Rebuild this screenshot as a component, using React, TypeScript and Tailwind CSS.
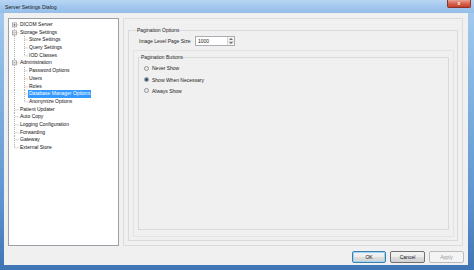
import React from 'react'

type Row = {
  label: string
  level: 0 | 1
  expander?: '+' | '-'
  first?: boolean
  last?: boolean
  selected?: boolean
}

const rows: Row[] = [
  { label: 'DICOM Server', level: 0, expander: '+', first: true },
  { label: 'Storage Settings', level: 0, expander: '-' },
  { label: 'Store Settings', level: 1 },
  { label: 'Query Settings', level: 1 },
  { label: 'IOD Classes', level: 1, last: true },
  { label: 'Administration', level: 0, expander: '-' },
  { label: 'Password Options', level: 1 },
  { label: 'Users', level: 1 },
  { label: 'Roles', level: 1 },
  { label: 'Database Manager Options', level: 1, selected: true },
  { label: 'Anonymize Options', level: 1, last: true },
  { label: 'Patient Updater', level: 0 },
  { label: 'Auto Copy', level: 0 },
  { label: 'Logging Configuration', level: 0 },
  { label: 'Forwarding', level: 0 },
  { label: 'Gateway', level: 0 },
  { label: 'External Store', level: 0, last: true },
]

const H = 7.7
const dot = { stroke: '#b4b4b4', strokeWidth: 1, strokeDasharray: '1 1' }

function Gutter({ row }: { row: Row }) {
  const mid = H / 2
  if (row.level === 0) {
    const y1 = row.first ? mid : 0
    const y2 = row.last ? mid : H
    return (
      <svg width={10} height={H} className="shrink-0">
        <line x1={5.5} y1={y1} x2={5.5} y2={y2} {...dot} />
        <line x1={5.5} y1={mid} x2={10} y2={mid} {...dot} />
        {row.expander && (
          <g>
            <rect x={3.5} y={mid - 2} width={4} height={4} fill="#fff" stroke="#9a9a9a" strokeWidth={0.8} />
            <line x1={4.3} y1={mid} x2={6.7} y2={mid} stroke="#4a4a4a" strokeWidth={0.6} />
            {row.expander === '+' && (
              <line x1={5.5} y1={mid - 1.2} x2={5.5} y2={mid + 1.2} stroke="#4a4a4a" strokeWidth={0.6} />
            )}
          </g>
        )}
      </svg>
    )
  }
  return (
    <svg width={19} height={H} className="shrink-0">
      <line x1={5.5} y1={0} x2={5.5} y2={H} {...dot} />
      <line x1={15.5} y1={0} x2={15.5} y2={row.last ? mid : H} {...dot} />
      <line x1={15.5} y1={mid} x2={19} y2={mid} {...dot} />
    </svg>
  )
}

function Radio({ checked }: { checked?: boolean }) {
  return (
    <span className="w-[5px] h-[5px] rounded-full border-[0.8px] border-[#8e8f8f] bg-[radial-gradient(circle,#e6e6e6,#f8f8f8)] flex items-center justify-center shrink-0">
      {checked && <span className="w-[2.4px] h-[2.4px] rounded-full bg-[#2d4a6e]" />}
    </span>
  )
}

function Button({ label, primary, disabled }: { label: string; primary?: boolean; disabled?: boolean }) {
  if (disabled) {
    return (
      <div className="w-[35px] h-[12px] rounded-[2px] border border-[#b9bcbe] bg-[#f4f4f4] flex items-center justify-center text-[#9a9a9a]">
        {label}
      </div>
    )
  }
  return (
    <div
      className={
        primary
          ? 'w-[34px] h-[12px] rounded-[2px] border border-[#3c7fb1] bg-[linear-gradient(180deg,#f4f4f4_0%,#ececec_48%,#dedede_52%,#d2d2d2_100%)] shadow-[inset_0_0_0_1px_#9fd3f3] flex items-center justify-center text-[#111]'
          : 'w-[35px] h-[12px] rounded-[2px] border border-[#707070] bg-[linear-gradient(180deg,#f4f4f4_0%,#ececec_48%,#dedede_52%,#d2d2d2_100%)] flex items-center justify-center text-[#111]'
      }
    >
      {label}
    </div>
  )
}

export default function App() {
  return (
    <div
      className="w-[474px] h-[270px] overflow-hidden flex flex-col bg-[linear-gradient(180deg,#a9cdef_0%,#86b6e4_30%,#5d93cf_75%,#3f74b5_100%)] text-[5px] leading-[6px] text-[#1b1b1b]"
      style={{ fontFamily: '"Liberation Sans", Arial, sans-serif' }}
    >
      {/* title bar */}
      <div className="h-[13px] flex items-start bg-[linear-gradient(180deg,#b8d6f3_0%,#a3c8ee_50%,#94bde8_100%)]">
        <span className="pl-[5px] pt-[4px] text-[5.2px] text-[#1a1a1a]">Server Settings Dialog</span>
        <div className="ml-auto mr-[3px] w-[24px] h-[8px] rounded-b-[2px] border border-t-0 border-[#8a3325] bg-[linear-gradient(180deg,#e9a397_0%,#d7644f_50%,#c7402a_100%)] flex items-center justify-center text-white text-[5px] font-bold leading-none">
          x
        </div>
      </div>

      {/* frame + client */}
      <div className="flex-1 flex pl-[4px] pr-[6px] pb-[5px]">
        <div className="flex-1 bg-[#f0f0f0] flex flex-col">
          <div className="flex mt-[5px] ml-[4px] gap-[4px]">
            {/* tree */}
            <div className="w-[111px] h-[228px] bg-white border border-[#9a9ea5] pt-[2px]">
              {rows.map((row) => (
                <div key={row.label} className="flex items-center h-[7.7px] leading-[7.7px] whitespace-nowrap">
                  <Gutter row={row} />
                  <span
                    className={
                      row.selected
                        ? 'px-[1px] h-[7.7px] bg-[#3399ff] text-white'
                        : 'px-[1px] h-[7.7px] text-[#111]'
                    }
                  >
                    {row.label}
                  </span>
                </div>
              ))}
            </div>

            {/* settings panel */}
            <div className="w-[340px] h-[228px] border border-[#dcdcdc] pl-[4px] pt-[8px]">
              <fieldset className="w-[330px] h-[214px] border border-[#dadada] p-0 m-0">
                <legend className="ml-[8px] leading-[6px] text-[#1b1b1b]">Pagination Options</legend>
                <div className="flex items-center mt-[3px] pl-[10px] h-[10px]">
                  <span className="w-[56px]">Image Level Page Size</span>
                  <div className="w-[40px] h-[10px] border border-[#abadb3] bg-white flex">
                    <span className="flex-1 pl-[2px] leading-[8px]">1000</span>
                    <div className="w-[7px] flex flex-col border-l border-[#d6d6d6] bg-[#f2f2f2]">
                      <div className="flex-1 flex items-center justify-center border-b border-[#d6d6d6]">
                        <svg width={4} height={2} viewBox="0 0 4 2">
                          <path d="M0 2 L2 0 L4 2 Z" fill="#6d6d6d" />
                        </svg>
                      </div>
                      <div className="flex-1 flex items-center justify-center">
                        <svg width={4} height={2} viewBox="0 0 4 2">
                          <path d="M0 0 L2 2 L4 0 Z" fill="#6d6d6d" />
                        </svg>
                      </div>
                    </div>
                  </div>
                </div>
                <div className="ml-[4px] mt-[4px] w-[321px] h-[187px] border border-[#e3e3e3] pl-[4px] pt-[3px]">
                  <fieldset className="w-[311px] h-[176px] border border-[#dadada] p-0 m-0">
                    <legend className="ml-[2px] leading-[6px] text-[#1b1b1b]">Pagination Buttons</legend>
                    <div className="flex flex-col pl-[5px] pt-[2.6px]">
                      <label className="flex items-center gap-[3px] h-[11.3px]">
                        <Radio />
                        <span>Never Show</span>
                      </label>
                      <label className="flex items-center gap-[3px] h-[11.3px]">
                        <Radio checked />
                        <span>Show When Necessary</span>
                      </label>
                      <label className="flex items-center gap-[3px] h-[11.3px]">
                        <Radio />
                        <span>Always Show</span>
                      </label>
                    </div>
                  </fieldset>
                </div>
              </fieldset>
            </div>
          </div>

          {/* buttons */}
          <div className="flex justify-end gap-[4px] pr-[4px] mt-[5px]">
            <Button label="OK" primary />
            <Button label="Cancel" />
            <Button label="Apply" disabled />
          </div>
        </div>
      </div>
    </div>
  )
}
